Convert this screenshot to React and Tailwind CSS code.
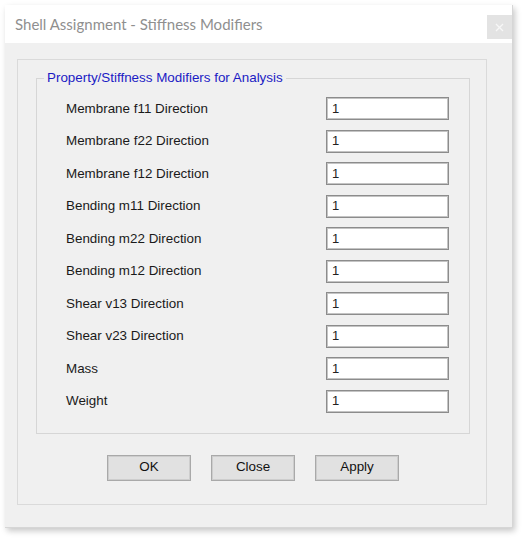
import React from "react";

const rows = [
  "Membrane f11 Direction",
  "Membrane f22 Direction",
  "Membrane f12 Direction",
  "Bending m11 Direction",
  "Bending m22 Direction",
  "Bending m12 Direction",
  "Shear v13 Direction",
  "Shear v23 Direction",
  "Mass",
  "Weight",
];

const sans = { fontFamily: '"Liberation Sans", Arial, sans-serif' };

export default function App() {
  return (
    <div className="w-[522px] h-[539px] bg-white overflow-hidden">
      <div className="ml-[5px] pt-[5px]">
        <div className="w-[508px] h-[523px] flex flex-col bg-[#f0f0f0] border-r border-b border-[#d6d6d6] shadow-[2px_3px_6px_rgba(0,0,0,0.22)]">
          {/* title bar */}
          <div className="h-[38px] bg-white flex items-start shrink-0">
            <div
              className="pl-[10px] pt-[10px] text-[15px] leading-[18px] text-[#8f8f8f]"
              style={{ fontFamily: 'Lato, "Open Sans", sans-serif' }}
            >
              Shell Assignment - Stiffness Modifiers
            </div>
            <div className="ml-auto mt-[10px] w-[25px] h-[24px] bg-[#e3e3e3] flex items-center justify-center">
              <svg width="9" height="9" viewBox="0 0 9 9">
                <path d="M1 1L8 8M8 1L1 8" stroke="#f7f7f7" strokeWidth="1.3" />
              </svg>
            </div>
          </div>
          {/* body */}
          <div className="flex-1 pl-[12px] pt-[16px]">
            <div className="w-[470px] h-[446px] border border-[#dadada] pl-[18px] pr-[16px] pt-[10px] flex flex-col" style={sans}>
              <fieldset className="w-[434px] border border-[#d6d6d6] pl-[29px] pr-[20px] pt-[11px] pb-[20px]">
                <legend className="-ml-[22px] px-[3px] text-[13.4px] leading-[16px] text-[#1b1bc4]">
                  Property/Stiffness Modifiers for Analysis
                </legend>
                <div className="flex flex-col gap-[9.5px]">
                  {rows.map((r) => (
                    <div key={r} className="h-[23px] flex items-center justify-between">
                      <span className="text-[13.4px] leading-[16px] text-[#1a1a1a]">{r}</span>
                      <div className="w-[123px] h-[23px] bg-white border border-[#8c8c8c] shadow-[inset_0_0_0_1px_#c4c4c4] flex items-center pl-[5px] text-[13px] text-[#222]">
                        1
                      </div>
                    </div>
                  ))}
                </div>
              </fieldset>
              <div className="mt-[21px] flex justify-center gap-[20px]">
                {["OK", "Close", "Apply"].map((b) => (
                  <div
                    key={b}
                    className="w-[84px] h-[26px] bg-[#e1e1e1] border border-[#a9a9a9] shadow-[inset_0_0_0_1px_#cdcdcd] flex items-center justify-center text-[13.4px] text-[#111]"
                  >
                    {b}
                  </div>
                ))}
              </div>
            </div>
          </div>
        </div>
      </div>
    </div>
  );
}
